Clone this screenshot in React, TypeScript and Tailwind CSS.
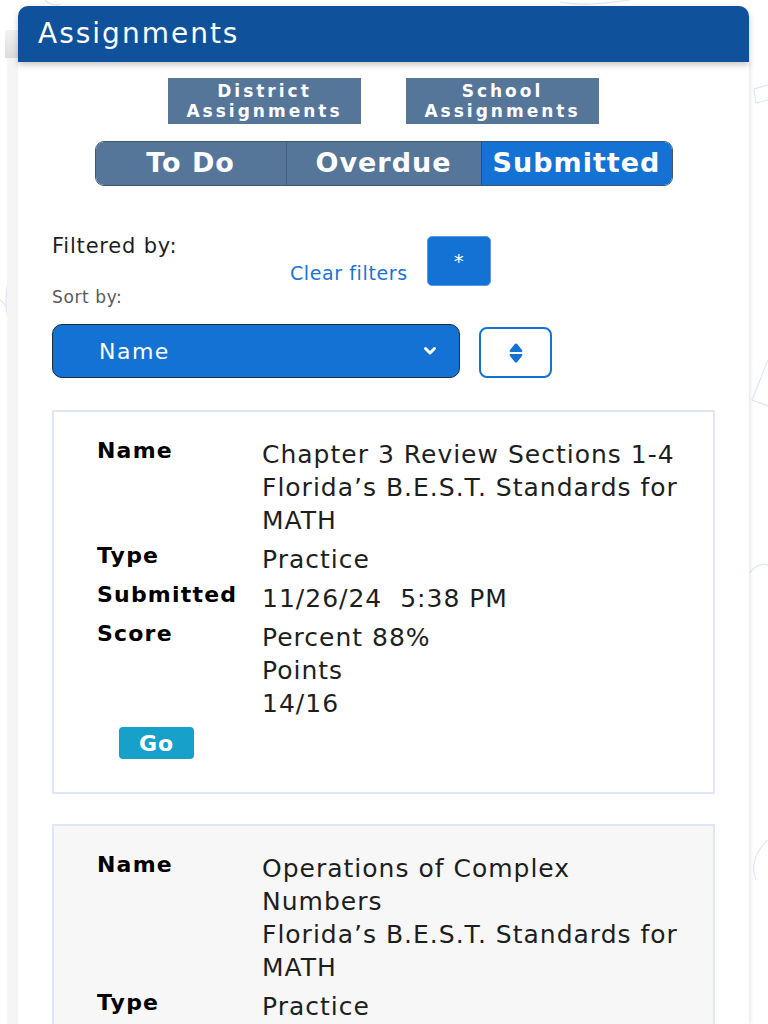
const dv = "font-['DejaVu_Sans',sans-serif]";

type Row = { label: string; lines: string[] };

const cards: { bg: string; rows: Row[]; go: boolean }[] = [
  {
    bg: "bg-white",
    go: true,
    rows: [
      { label: "Name", lines: ["Chapter 3 Review Sections 1-4", "Florida’s B.E.S.T. Standards for MATH"] },
      { label: "Type", lines: ["Practice"] },
      { label: "Submitted", lines: ["11/26/24\u00a0\u00a05:38 PM"] },
      { label: "Score", lines: ["Percent 88%", "Points", "14/16"] },
    ],
  },
  {
    bg: "bg-[#f7f7f7]",
    go: false,
    rows: [
      { label: "Name", lines: ["Operations of Complex Numbers", "Florida’s B.E.S.T. Standards for MATH"] },
      { label: "Type", lines: ["Practice"] },
    ],
  },
];

function Doodles() {
  return (
    <svg className="pointer-events-none absolute inset-0 h-full w-full" viewBox="0 0 768 1024" fill="none" stroke="#dbe7f7" strokeWidth="1.2">
      <path d="M45 0c4 4 10 6 16 4" />
      <path d="M560 2c20 4 40 2 70 -2" />
      <path d="M12 270c-6 14-8 30-4 50M0 300c6 4 10 12 8 22" />
      <path d="M768 85l-14 4 2 14 12-3" />
      <path d="M768 360l-16 40 16 6" />
      <path d="M768 565c-8-2-14 2-18 8" />
      <path d="M768 840c-12 10-18 26-12 40" />
    </svg>
  );
}

function InfoCard({ bg, rows, go }: { bg: string; rows: Row[]; go: boolean }) {
  return (
    <div className={`border-2 border-[#dfe5fb] ${bg} pt-[26px] pb-[33px] pl-[43px]`}>
      <div className="flex flex-col gap-[6px]">
        {rows.map((r) => (
          <div key={r.label} className="flex">
            <div className={`w-[165px] shrink-0 ${dv} text-[22px] font-bold leading-[25px] tracking-[1.2px] text-black`}>
              {r.label}
            </div>
            <div className={`w-[426px] ${dv} text-[25px] leading-[33px] tracking-[1px] text-[#1e1e1e]`}>
              {r.lines.map((l) => (
                <div key={l}>{l}</div>
              ))}
            </div>
          </div>
        ))}
      </div>
      {go && (
        <button className={`mt-[7px] ml-[22px] flex h-[32px] w-[75px] items-center justify-center rounded-[4px] bg-[#17a0c9] ${dv} text-[22px] font-bold tracking-[1px] text-white`}>
          Go
        </button>
      )}
    </div>
  );
}

export default function App() {
  return (
    <div className="relative h-[1024px] w-[768px] overflow-hidden bg-white">
      <Doodles />
      <div className="absolute left-[7px] top-[30px] bottom-0 w-[12px] bg-[#f5f5f5]" />
      <div className="absolute left-[5px] top-[30px] h-[28px] w-[14px] bg-gradient-to-b from-[#f2f2f2] to-[#dcdcdc]" />

      <div className="relative ml-[18px] mt-[6px] w-[731px]">
        <div className="relative z-10 flex h-[56px] items-center rounded-t-[10px] bg-[#10519b] pl-[20px] shadow-[0_3px_6px_rgba(0,0,0,0.22)]">
          <span className={`${dv} text-[28px] tracking-[2px] text-white`}>Assignments</span>
        </div>

        <div className="h-[962px] bg-white px-[34px] pt-[16px] shadow-[2px_0_3px_rgba(0,0,0,0.08)]">
          <div className="flex justify-center gap-[45px]">
            {["District", "School"].map((t) => (
              <div
                key={t}
                className={`flex h-[46px] w-[193px] flex-col items-center justify-center bg-[#557699] ${dv} text-[17px] font-bold leading-[20px] tracking-[3px] text-white`}
              >
                <span>{t}</span>
                <span>Assignments</span>
              </div>
            ))}
          </div>

          <div className={`mx-auto mt-[17px] flex h-[45px] w-[578px] overflow-hidden rounded-[9px] border border-[#3c5877] ${dv} text-[27px] font-bold tracking-[1px] text-white`}>
            <div className="flex w-[190px] items-center justify-center bg-[#557699]">To Do</div>
            <div className="flex w-[195px] items-center justify-center border-l border-[#46627f] bg-[#557699]">Overdue</div>
            <div className="flex flex-1 items-center justify-center border-l border-[#2f4f73] bg-[#1372d4]">Submitted</div>
          </div>

          <div className="mt-[50px] flex h-[50px]">
            <div className={`-mt-[2px] w-[238px] self-start ${dv} text-[21px] leading-[24px] tracking-[0.8px] text-[#1e1e1e]`}>
              Filtered by:
            </div>
            <div className={`mb-[1px] self-end ${dv} text-[19px] leading-[24px] tracking-[0.6px] text-[#1a73d2]`}>
              Clear filters
            </div>
            <button className={`ml-[19px] flex h-[50px] w-[64px] items-center justify-center rounded-[5px] border border-[#5a9ce2] bg-[#1372d4] ${dv} text-[20px] text-white`}>
              *
            </button>
          </div>

          <div className={`mt-[1px] ${dv} text-[17px] leading-[20px] tracking-[0.6px] text-[#5a5a5a]`}>Sort by:</div>

          <div className="mt-[17px] flex items-end gap-[19px]">
            <div className="flex h-[54px] w-[408px] items-center justify-between rounded-[10px] border border-[#1f2c3d] bg-[#1372d4] pl-[46px] pr-[22px]">
              <span className={`${dv} text-[22px] tracking-[1.5px] text-white`}>Name</span>
              <svg width="14" height="10" viewBox="0 0 14 10" fill="none" stroke="white" strokeWidth="3" strokeLinecap="round" strokeLinejoin="round">
                <path d="M2.5 2.5l4.5 4.5 4.5-4.5" />
              </svg>
            </div>
            <button className="flex h-[51px] w-[73px] items-center justify-center rounded-[8px] border-2 border-[#1372d4] bg-white">
              <svg width="16" height="22" viewBox="0 0 16 22" fill="#1372d4">
                <path d="M8 1.5c.5 0 .9.2 1.2.6l5 6.2c.6.8.1 1.7-.9 1.7H2.7c-1 0-1.5-.9-.9-1.7l5-6.2c.3-.4.7-.6 1.2-.6z" />
                <path d="M8 20.5c.5 0 .9-.2 1.2-.6l5-6.2c.6-.8.1-1.7-.9-1.7H2.7c-1 0-1.5.9-.9 1.7l5 6.2c.3.4.7.6 1.2.6z" />
              </svg>
            </button>
          </div>

          <div className="mt-[32px] flex flex-col gap-[30px]">
            {cards.map((c, i) => (
              <InfoCard key={i} bg={c.bg} rows={c.rows} go={c.go} />
            ))}
          </div>
        </div>
      </div>
    </div>
  );
}
